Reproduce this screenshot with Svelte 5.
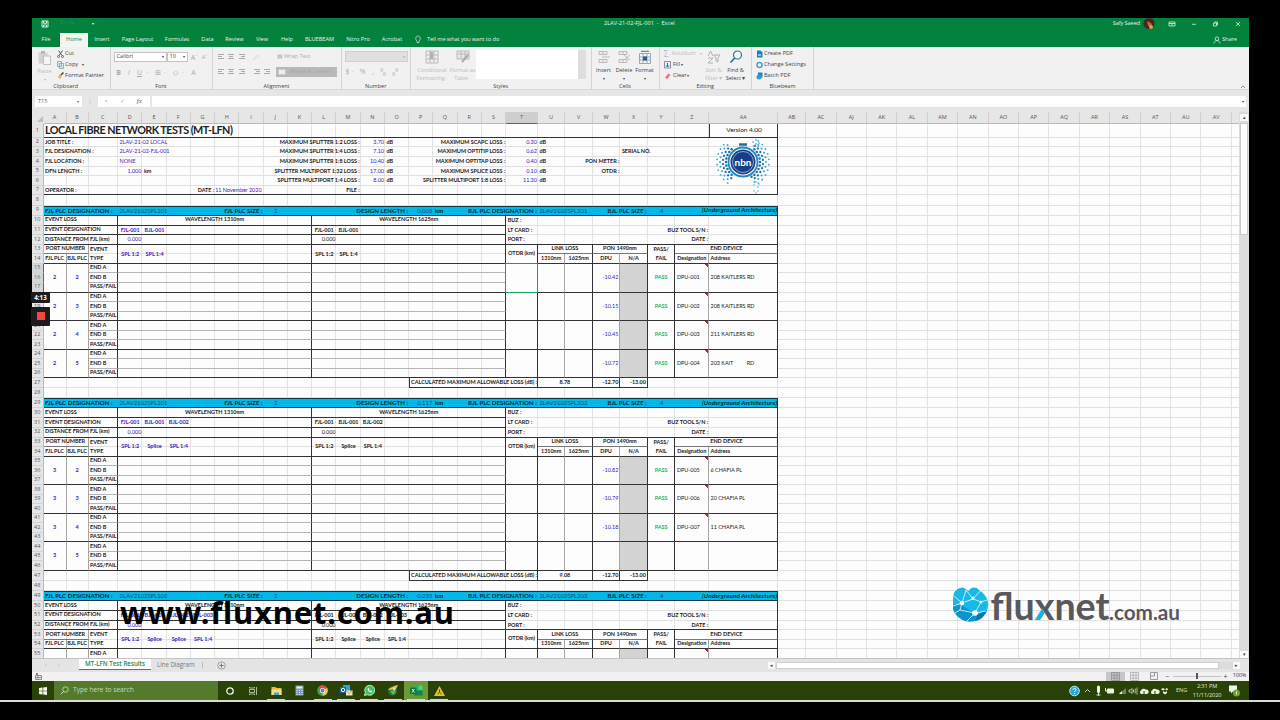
<script>
	const columns = [
		["A", 23], ["B", 22], ["C", 29.5], ["D", 24.4], ["E", 24.3], ["F", 24.2], ["G", 24.3], ["H", 24.2],
		["I", 24.3], ["J", 24.3], ["K", 24.2], ["L", 24.3], ["M", 24.2], ["N", 24.3], ["O", 24.2], ["P", 24.3],
		["Q", 24.2], ["R", 24.3], ["S", 24.3], ["T", 31.7], ["U", 27.5], ["V", 27.5], ["W", 27.5], ["X", 27.5],
		["Y", 27.5], ["Z", 33.7], ["AA", 69.3], ["AB", 27.8], ["AC", 30.4], ["AJ", 30.4], ["AK", 30.4],
		["AL", 30.4], ["AM", 30.4], ["AN", 30.5], ["AO", 30.4], ["AP", 30.4], ["AQ", 30.4], ["AR", 30.5],
		["AS", 30.4], ["AT", 30.4], ["AU", 30.4], ["AV", 30.5], ["", 8],
	];

	const blockHeights = [10, 9.9, 9.7, 9.7, 9.5, 9.5, ...Array(12).fill(9.54), 10, 10];
	const rowHeights = [14.2, ...Array(6).fill(9.58), 10.3, ...blockHeights, ...blockHeights, ...blockHeights.slice(0, 7)];
	const gridStyle =
		`grid-template-columns: 11.5px ${columns.map((c) => c[1] + "px").join(" ")};` +
		`grid-template-rows: 11.7px ${rowHeights.map((h) => h + "px").join(" ")};`;

	const col = (name) => columns.findIndex((c) => c[0] === name) + 2;

	const cells = [];
	function put(row, from, to, text = "", cls = "", span = 1) {
		cells.push({
			text,
			cls,
			area: `${row + 1} / ${col(from)} / ${row + 1 + span} / ${col(to) + 1}`,
		});
	}

	// job details
	put(1, "A", "Z", "LOCAL FIBRE NETWORK TESTS (MT-LFN)", "title bb");
	put(1, "AA", "AA", "Version 4.00", "version bl br bb");
	put(2, "A", "AA", "", "br bb", 6);
	["JOB TITLE :", "FJL DESIGNATION :", "FJL LOCATION :", "DFN LENGTH :"].forEach((t, i) => put(2 + i, "A", "C", t, "bold"));
	put(7, "A", "C", "OPERATOR :", "bold");
	put(2, "D", "G", "2LAV-21-02 LOCAL", "blue");
	put(3, "D", "G", "2LAV-21-02-FJL-001", "blue");
	put(4, "D", "G", "NONE", "blue");
	put(5, "D", "D", "1.000", "blue right");
	put(5, "E", "E", "km", "bold");
	put(7, "F", "G", "DATE :", "bold right");
	put(7, "H", "J", "11 November 2020", "blue date");
	put(7, "L", "M", "FILE :", "bold right");
	[
		["MAXIMUM SPLITTER 1:2 LOSS :", "3.70", "MAXIMUM SCAPC LOSS :", "0.30"],
		["MAXIMUM SPLITTER 1:4 LOSS :", "7.10", "MAXIMUM OPTITIP LOSS :", "0.62"],
		["MAXIMUM SPLITTER 1:8 LOSS :", "10.40", "MAXIMUM OPTITAP LOSS :", "0.40"],
		["SPLITTER MULTIPORT 1:32 LOSS :", "17.00", "MAXIMUM SPLICE LOSS :", "0.10"],
		["SPLITTER MULTIPORT 1:4 LOSS :", "8.00", "SPLITTER MULTIPORT 1:8 LOSS :", "11.30"],
	].forEach(([a, av, b, bv], i) => {
		put(2 + i, "I", "M", a, "bold right");
		put(2 + i, "N", "N", av, "blue right");
		put(2 + i, "O", "O", "dB", "bold");
		put(2 + i, "P", "S", b, "bold right");
		put(2 + i, "T", "T", bv, "blue right");
		put(2 + i, "U", "U", "dB", "bold");
	});
	put(3, "X", "Y", "SERIAL NO.", "bold");
	put(4, "V", "W", "PON METER :", "bold right");
	put(5, "V", "W", "OTDR :", "bold right");

	function block(s, b) {
		put(s, "A", "AA", "", "band");
		put(s, "A", "C", "FJL PLC DESIGNATION :", "bold bandtext");
		put(s, "D", "G", b.fjl, "bandvalue");
		put(s, "G", "I", "FJL PLC SIZE :", "bold right bandtext");
		put(s, "J", "J", "2", "center bandvalue");
		put(s, "M", "O", "DESIGN LENGTH :", "bold right bandtext");
		put(s, "P", "P", b.length, "right bandvalue");
		put(s, "Q", "Q", "km", "bold bandtext");
		put(s, "Q", "T", "BJL PLC DESIGNATION :", "bold right bandtext");
		put(s, "U", "W", b.bjl, "bandvalue");
		put(s, "V", "X", "BJL PLC SIZE :", "bold right bandtext");
		put(s, "Y", "Y", "4", "center bandvalue");
		put(s, "Z", "AA", "(Underground Architecture)", "bold italic right bandtext");

		put(s + 1, "A", "C", "EVENT LOSS", "bold bb br");
		put(s + 2, "A", "C", "EVENT DESIGNATION", "bold bb br");
		put(s + 3, "A", "C", "DISTANCE FROM FJL (km)", "bold bb br");
		put(s + 1, "D", "K", "WAVELENGTH 1310nm", "bold center bb br");
		put(s + 1, "L", "S", "WAVELENGTH 1625nm", "bold center bb br");
		for (const r of [s + 2, s + 3]) {
			put(r, "D", "K", "", "bb br");
			put(r, "L", "S", "", "bb br");
		}
		put(s + 3, "D", "D", "0.000", "blue right");
		put(s + 3, "L", "L", "0.000", "right");
		const left = ["D", "E", "F", "G"];
		const mid = ["L", "M", "N", "O"];
		b.events.forEach((e, i) => {
			put(s + 2, left[i], left[i], e, "blue bold center");
			put(s + 2, mid[i], mid[i], e, "bold center");
			put(s + 4, left[i], left[i], b.types[i], "blue bold center", 2);
			put(s + 4, mid[i], mid[i], b.types[i], "bold center", 2);
		});
		put(s + 1, "T", "U", "BUZ :", "bold");
		put(s + 2, "T", "U", "LT CARD :", "bold");
		put(s + 3, "T", "U", "PORT :", "bold");
		put(s + 1, "T", "AA", "", "bb br", 3);
		put(s + 2, "X", "Z", "BUZ TOOL S/N :", "bold right");
		put(s + 3, "X", "Z", "DATE :", "bold right");

		put(s + 4, "A", "B", "PORT NUMBER", "bold center thinb thinr");
		put(s + 5, "A", "A", "FJL PLC", "bold center bb thinr");
		put(s + 5, "B", "B", "BJL PLC", "bold center bb thinr");
		put(s + 4, "C", "C", "EVENT\nTYPE", "bold wrap bb br", 2);
		put(s + 4, "D", "K", "", "bb br", 2);
		put(s + 4, "L", "S", "", "bb br", 2);
		put(s + 4, "T", "T", "OTDR (km)", "bold center bb br white", 2);
		put(s + 4, "U", "V", "LINK LOSS", "bold center br thinb white");
		put(s + 5, "U", "U", "1310nm", "bold center bb thinr");
		put(s + 5, "V", "V", "1625nm", "bold center bb br");
		put(s + 4, "W", "X", "PON 1490nm", "bold center br thinb white");
		put(s + 5, "W", "W", "DPU", "bold center bb thinr");
		put(s + 5, "X", "X", "N/A", "bold center bb br");
		put(s + 4, "Y", "Y", "PASS/\nFAIL", "bold center wrap bb br white", 2);
		put(s + 4, "Z", "AA", "END DEVICE", "bold center br thinb white");
		put(s + 5, "Z", "Z", "Designation", "bold center bb thinr");
		put(s + 5, "AA", "AA", "Address", "bold bb br");

		b.ports.forEach(([fjl, bjl, loss, dpu, address], i) => {
			const r = s + 6 + i * 3;
			const span = Math.min(3, rowHeights.length - r + 1);
			put(r, "A", "A", fjl, "blue bold center white bb thinr", span);
			put(r, "B", "B", bjl, "blue bold center white bb thinr", span);
			["END A", "END B", "PASS/FAIL"].slice(0, span).forEach((t, j) => {
				const edge = j === 2 ? "bb" : "greyb";
				put(r + j, "C", "C", t, "bold br " + edge);
				put(r + j, "D", "K", "", "br " + edge);
				put(r + j, "L", "S", "", "br " + edge);
			});
			put(r, "T", "T", "", "white bb br", span);
			put(r, "U", "U", "", "white bb thinr", span);
			put(r, "V", "V", "", "white bb br", span);
			put(r, "W", "W", loss, "blue right white bb thinr", span);
			put(r, "X", "X", "", "grey bb br", span);
			put(r, "Y", "Y", loss ? "PASS" : "", "green bold center white bb br", span);
			put(r, "Z", "Z", dpu, "white bb thinr" + (loss || span < 3 ? " note" : ""), span);
			put(r, "AA", "AA", address, "pre white bb br", span);
		});

		if (b.allowed) {
			put(s + 18, "P", "T", "CALCULATED MAXIMUM ALLOWABLE LOSS (dB) :", "bold total bl bb br");
			put(s + 18, "U", "V", b.allowed, "bold center bb br white");
			put(s + 18, "W", "W", "-12.70", "bold right bb br");
			put(s + 18, "X", "X", "-13.00", "bold right bb br");
		}
	}

	block(9, {
		fjl: "2LAV2102SPL101", bjl: "2LAV2102SPL201", length: "0.005", allowed: "8.78",
		events: ["FJL-001", "BJL-001"],
		types: ["SPL 1:2", "SPL 1:4"],
		ports: [
			["2", "2", "-10.42", "DPU-001", "208 KAITLERS RD"],
			["2", "3", "-10.15", "DPU-002", "208 KAITLERS RD"],
			["2", "4", "-10.45", "DPU-003", "211 KAITLERS RD"],
			["2", "5", "-10.72", "DPU-004", "203 KAIT          RD"],
		],
	});
	block(29, {
		fjl: "2LAV2102SPL101", bjl: "2LAV2102SPL202", length: "0.117", allowed: "9.08",
		events: ["FJL-001", "BJL-001", "BJL-002"],
		types: ["SPL 1:2", "Splice", "SPL 1:4"],
		ports: [
			["3", "2", "-10.82", "DPU-005", "6 CHAFIA PL"],
			["3", "3", "-10.79", "DPU-006", "20 CHAFIA PL"],
			["3", "4", "-10.18", "DPU-007", "11 CHAFIA PL"],
			["3", "5", "", "", ""],
		],
	});
	block(49, {
		fjl: "2LAV2102SPL102", bjl: "2LAV2102SPL203", length: "0.235",
		events: ["FJL-001", "BJL-001", "BJL-002", "BJL-003"],
		types: ["SPL 1:2", "Splice", "Splice", "SPL 1:4"],
		ports: [["", "", "", "", ""]],
	});
	put(15, "T", "T", "", "selected", 3);

	const tabs = [
		["File", 28], ["Home", 28], ["Insert", 28], ["Page Layout", 43], ["Formulas", 36], ["Data", 25], ["Review", 29],
		["View", 26], ["Help", 24], ["BLUEBEAM", 41], ["Nitro Pro", 36], ["Acrobat", 32],
	];

	// dots around the nbn disc, thinning out towards the bottom right
	const dots = [];
	for (let ring = 0; ring < 4; ring++) {
		for (let a = ring % 2 ? 6 : 0; a < 360; a += 12) {
			const side = a < 62 || a > 302 || (a > 124 && a < 232);
			if (!side) continue;
			const rad = (a * Math.PI) / 180;
			const d = 17 + ring * 3;
			dots.push({ x: 27 + Math.cos(rad) * d, y: 24 + Math.sin(rad) * d, r: 1.25 - ring * 0.12, c: ring > 1 ? "#35a9cf" : "#1672b0" });
		}
	}
	[[40, 44], [43, 46], [38, 47], [42, 49], [46, 42], [38, 53], [42, 53], [40, 55]].forEach(([x, y]) => dots.push({ x, y, r: 0.8, c: "#4bb8cf" }));
	[[37, 4], [40, 2], [40, 6], [43, 5], [38, 8], [42, 9]].forEach(([x, y]) => dots.push({ x, y, r: 0.8, c: "#2b94bf" }));
</script>

{#snippet lines(w)}
	<svg width="8" height="8" viewBox="0 0 8 8"><path d="M1 1.5h6M{w} 3.5h4M1 5.5h6" stroke="#aaa" fill="none" /></svg>
{/snippet}

{#snippet grid(color)}
	<svg width="9" height="9" viewBox="0 0 9 9"><path d="M.5.5h8v8h-8zM.5 3.2h8M.5 6h8M3.2.5v8M6 .5v8" stroke={color} stroke-width=".7" fill="none" /></svg>
{/snippet}

<div class="screen">
	<div class="desktop">
		<header>
			<div class="titlebar">
				<svg class="save" width="8" height="8" viewBox="0 0 8 8"><path d="M1 1h6v6H1zM2.5 1v2.3h3V1M2.5 7V5h3v2" stroke="#d5f0df" fill="none" /></svg>
				<span class="undo">↶ · ↷ ·</span>
				<span class="qat">▾</span>
				<span class="doc">2LAV-21-02-FJL-001 &nbsp;-&nbsp; Excel</span>
				<span class="user">Safy Saeed</span>
				<svg class="avatar" width="12" height="12" viewBox="0 0 12 12"><circle cx="6" cy="5.5" r="5.5" fill="#43281f" /><path d="M4 3l4 2 2 4-5-1z" fill="#d15b42" /><circle cx="8" cy="9" r="2" fill="#d2a33f" /></svg>
				<svg class="winctl" width="76" height="10" viewBox="0 0 76 10" fill="none" stroke="#d5f0df" stroke-width=".8">
					<path d="M2 3h6v4H2zM2 4.5h6M5 4.5V7M25 5.3h4M46.5 4h3v3h-3zM47.5 4V3h3v3h-1M69 3l4 4M73 3l-4 4" />
				</svg>
			</div>
			<nav>
				{#each tabs as [name, width]}
					<span class="tab" class:active={name === "Home"} style="width: {width}px">{name}</span>
				{/each}
				<svg class="bulb" width="8" height="9" viewBox="0 0 8 9"><path d="M3 6C1 4.500 1.500 1 4 1s3 3.500 1 5v1.500H3z" stroke="#d5f0df" stroke-width=".7" fill="none" /></svg>
				<span class="tell">Tell me what you want to do</span>
				<span class="share">
					<svg width="8" height="8" viewBox="0 0 8 8" fill="none" stroke="#d5f0df" stroke-width=".8"><circle cx="4" cy="2.700" r="1.800" /><path d="M1 7.500C1 5.500 2.500 4.600 4 4.600S6.500 5.500 7 7.500" /></svg>
					Share
				</span>
			</nav>
		</header>

		<div class="ribbon">
			<section class="group clipboard">
				<div class="body">
					<div class="big off paste">
						<svg width="15" height="15" viewBox="0 0 15 15"><path d="M1.500 2.500h9v11h-9z" fill="#d5d0d3" /><path d="M4 1h4v2.500H4z" fill="#b5b0b3" /><path d="M6.500 6h7v8.500h-7z" fill="#f6f6f6" stroke="#c2bec1" /></svg>
						<span>Paste</span><i>▾</i>
					</div>
					<div class="stack">
						<span><svg width="7" height="8" viewBox="0 0 7 8"><path d="M1.500.5l3.500 5M5.500.5L2 5.500" stroke="#555" /><circle cx="1.500" cy="6.500" r="1" fill="none" stroke="#467" /><circle cx="5.500" cy="6.500" r="1" fill="none" stroke="#467" /></svg>Cut</span>
						<span><svg width="7" height="8" viewBox="0 0 7 8"><path d="M.5.500h4v5h-4zM2.500 2.500h4v5h-4z" fill="#dfeaf0" stroke="#7893a5" stroke-width=".7" /></svg>Copy &nbsp;<b>▾</b></span>
						<span><svg width="7" height="8" viewBox="0 0 7 8"><path d="M1 5l2-3 2 2-2 3z" fill="#e5b45b" /><path d="M4 3l2.500-2.500" stroke="#444" stroke-width="1.500" /></svg>Format Painter</span>
					</div>
				</div>
				<footer>Clipboard</footer>
			</section>
			<section class="group font">
				<div class="line">
					<span class="combo name">Calibri<b>▾</b></span><span class="combo size">10<b>▾</b></span>
					<span class="glyph">A˄</span><span class="glyph small">A˅</span>
				</div>
				<div class="line second">
					<span class="glyph"><b>B</b></span><span class="glyph"><em>I</em></span><span class="glyph u">U</span><span class="dash">·</span>
					<span class="glyph">⊞</span><span class="dash">·</span><span class="glyph">◇</span><span class="dash">·</span><span class="glyph">A</span>
				</div>
				<footer>Font</footer>
			</section>
			<section class="group alignment">
				<div class="line">
					{@render lines(1)}{@render lines(2)}{@render lines(3)}
					<span class="glyph rotate">⟋·</span>
					<span class="wraptext">▤ Wrap Text</span>
				</div>
				<div class="line second">
					{@render lines(1)}{@render lines(2)}{@render lines(3)}
					<span class="indent">{@render lines(3)}{@render lines(3)}</span>
					<span class="merge"><svg width="8" height="6" viewBox="0 0 8 6"><path d="M.5.500h7v5h-7z" fill="#eee" stroke="#ccc" /></svg>Merge &amp; Center</span>
				</div>
				<footer>Alignment</footer>
			</section>
			<section class="group number">
				<div class="numbox">▾</div>
				<div class="line second"><span>$ ·</span><span>%</span><span>,</span><span class="dec">⁰₀</span><span class="dec">₀⁰</span></div>
				<footer>Number</footer>
			</section>
			<section class="group styles">
				<div class="body">
					<div class="big off cond">
						<svg width="14" height="14" viewBox="0 0 14 14"><path d="M1 1h12v12H1zM1 5h12M1 9h12M5 1v12M9 1v12" fill="#eee" stroke="#bbb" /><path d="M5 2h3v7H5z" fill="#b3afb3" /></svg>
						<span>Conditional<br />Formatting ·</span>
					</div>
					<div class="big off fmt">
						<svg width="14" height="14" viewBox="0 0 14 14"><path d="M1 1h12v8H1zM1 4h12M5 1v8M9 1v8" fill="#e8e8e8" stroke="#bbb" /><path d="M6 12l6-7" stroke="#aaa" stroke-width="2" /></svg>
						<span>Format as<br />Table ·</span>
					</div>
					<div class="gallery"><div></div></div>
				</div>
				<footer>Styles</footer>
			</section>
			<section class="group cellsgroup">
				<div class="body">
					<div class="big">
						<svg width="14" height="14" viewBox="0 0 14 14"><path d="M2 1.500h8v3H2zM2 9.500h8v3H2zM6 1.500v3M6 9.500v3M5 7h8" fill="#eee" stroke="#bbb" /></svg>
						<span>Insert</span><i>▾</i>
					</div>
					<div class="big">
						<svg width="14" height="14" viewBox="0 0 14 14"><path d="M2 1.500h8v3H2zM2 9.500h8v3H2zM6 1.500v3M6 9.500v3M7 5l6 5M13 5l-6 5" fill="#eee" stroke="#bbb" /></svg>
						<span>Delete</span><i>▾</i>
					</div>
					<div class="big">
						<svg width="14" height="14" viewBox="0 0 14 14"><path d="M1.500 3.500h11v10h-11zM1.500 7h11M1.500 10h11M5 3.500v10M9 3.500v10" fill="#f6f6f6" stroke="#99a7b3" /><path d="M3 1.300h8" stroke="#3778a8" /><path d="M5 6.500h4v4H5z" fill="#235f91" /></svg>
						<span>Format</span><i>▾</i>
					</div>
				</div>
				<footer>Cells</footer>
			</section>
			<section class="group editing">
				<div class="body">
					<div class="stack">
						<span class="off"><em class="sigma">Σ</em>AutoSum &nbsp; <b>▾</b></span>
						<span><svg width="7" height="8" viewBox="0 0 7 8"><path d="M.5.500h6v6.500h-6z" fill="#e8eef2" stroke="#668" stroke-width=".7" /><path d="M3.500 2v4M2 4.500L3.500 6 5 4.500" stroke="#2273a8" fill="none" /></svg>&nbsp;Fill <b>▾</b></span>
						<span><svg width="7" height="8" viewBox="0 0 7 8"><path d="M1 5.500l3.500-4 2 1.500L3 7z" fill="#e4718e" /></svg>&nbsp;Clear <b>▾</b></span>
					</div>
					<div class="big off sort">
						<svg width="14" height="14" viewBox="0 0 14 14"><path d="M1 6l2.500-5L6 6M1 8h5l-5 5h5M7 5h6l-2 3v4l-2-1V8z" fill="none" stroke="#b0b0b0" /></svg>
						<span>Sort &amp;<br />Filter ▾</span>
					</div>
					<div class="big find">
						<svg width="14" height="14" viewBox="0 0 14 14"><circle cx="8.500" cy="5" r="4" fill="#f8fbfd" stroke="#2e6f9f" stroke-width="1.200" /><path d="M5.700 8L1.500 12.500" stroke="#2e6f9f" stroke-width="1.700" /></svg>
						<span>Find &amp;<br />Select ▾</span>
					</div>
				</div>
				<footer>Editing</footer>
			</section>
			<section class="group bluebeam">
				<div class="stack">
					<span><svg width="7" height="8" viewBox="0 0 7 8"><path d="M1 .5h3.500l2 2v5H1z" fill="#1283c5" /><path d="M2 5h3" stroke="#fff" /></svg>Create PDF</span>
					<span><svg width="7" height="8" viewBox="0 0 7 8"><circle cx="3.500" cy="4" r="2.500" fill="#fff" stroke="#43a3dc" stroke-width="1.500" /></svg>Change Settings</span>
					<span><svg width="7" height="8" viewBox="0 0 7 8"><path d="M2 .5h4.500v5H2z" fill="#1283c5" /><circle cx="3" cy="5" r="2.500" fill="#299bd8" /></svg>Batch PDF</span>
				</div>
				<footer>Bluebeam</footer>
			</section>
			<svg class="collapse" width="6" height="4" viewBox="0 0 6 4"><path d="M1 3l2-2 2 2" fill="none" stroke="#777" stroke-width=".8" /></svg>
		</div>

		<div class="formula">
			<span class="namebox">T15<b>▾</b></span>
			<span class="sep">⋮</span>
			<span class="fx"><span>×</span><span>✓</span><em>fx</em></span>
			<span class="input">▾</span>
		</div>

		<main>
			<div class="sheet" style={gridStyle}>
				<div class="corner"><svg width="6" height="6" viewBox="0 0 6 6"><path d="M6 0v6H0z" fill="#bdbdbd" /></svg></div>
				{#each columns as [name], i}
					<div class="colhead" class:current={name === "T"} style="grid-area: 1 / {i + 2}">{name}</div>
					<div class="vline" style="grid-area: 2 / {i + 2} / -1 / {i + 3}"></div>
				{/each}
				{#each rowHeights as _, i}
					<div class="rowhead" class:current={i > 13 && i < 17} style="grid-area: {i + 2} / 1">{i + 1}</div>
					<div class="hline" style="grid-area: {i + 2} / 2 / {i + 3} / -1"></div>
				{/each}
				{#each cells as c}
					<div class="cell {c.cls}" style="grid-area: {c.area}"><span>{c.text}</span></div>
				{/each}
				<svg class="nbn" width="55" height="57" viewBox="0 0 55 57" style="grid-area: 3 / {col('AA')} / 9 / {col('AA') + 1}">
					{#each dots as d}
						<circle cx={d.x} cy={d.y} r={d.r} fill={d.c} />
					{/each}
					<path d="M23 6.500h8" stroke="#1a6eab" stroke-width="2.500" />
					<circle cx="27" cy="24" r="14.500" fill="#fff" stroke="#2387b8" stroke-width="1.800" />
					<circle cx="27" cy="24" r="12.500" fill="#173f88" />
					<circle cx="27" cy="24" r="10.500" fill="none" stroke="#dfe9f5" stroke-width=".6" />
					<text x="27" y="27.500" text-anchor="middle">nbn</text>
				</svg>
			</div>
			<div class="vscroll"><span>▴</span><div></div><span>▾</span></div>
		</main>

		<div class="sheettabs">
			<span class="arrows">‹</span><span class="arrows">›</span>
			<span class="sheettab">MT-LFN Test Results</span>
			<span class="othertab">Line Diagram</span>
			<svg width="9" height="9" viewBox="0 0 9 9"><circle cx="4.500" cy="4.500" r="3.700" fill="none" stroke="#888" stroke-width=".7" /><path d="M2.500 4.500h4M4.500 2.500v4" stroke="#777" /></svg>
			<div class="hscroll"><span>◂</span><div></div><span>▸</span></div>
		</div>

		<div class="status">
			<svg width="7" height="7" viewBox="0 0 7 7"><path d="M.5 2.500h6v4h-6zM.5 4.500h6M3 2.500v4" fill="none" stroke="#777" stroke-width=".8" /><circle cx="2" cy="1" r="1" fill="#a33" /></svg>
			<div class="views">
				<span class="on">{@render grid("#8a8a8a")}</span>
				<span>{@render grid("#a5a5a5")}</span>
				<span><svg width="8" height="8" viewBox="0 0 8 8"><path d="M.5.500h7v7h-7zM.500 4h4V.500" fill="none" stroke="#888" stroke-width=".8" /></svg></span>
			</div>
			<div class="zoom"><span>−</span><i><b></b></i><span>+</span></div>
			<span class="pct">100%</span>
		</div>

		<div class="taskbar">
			<div class="start"><svg width="8" height="8" viewBox="0 0 8 8"><path d="M0 1l3.600-.5v3.200H0zM4.200.4L8 0v3.700H4.200zM0 4.300h3.600v3.200L0 7zM4.200 4.300H8V8l-3.800-.4z" fill="#f4f8ef" /></svg></div>
			<div class="search">
				<svg width="9" height="9" viewBox="0 0 9 9"><circle cx="5.500" cy="3.500" r="2.700" fill="none" stroke="#d7e2c9" stroke-width=".8" /><path d="M3.500 5.500L.8 8.300" stroke="#d7e2c9" /></svg>
				Type here to search
			</div>
			<div class="apps">
				<span><svg width="10" height="10" viewBox="0 0 10 10"><circle cx="5" cy="5" r="3.200" fill="none" stroke="#eef3e6" stroke-width="1.300" /></svg></span>
				<span><svg width="10" height="10" viewBox="0 0 10 10"><path d="M1.500 3.500h5v3h-5zM1.500 1v1h5V1M1.500 9V8h5v1M8.500 1v8" fill="none" stroke="#cdd8bd" stroke-width=".8" /></svg></span>
				<span class="open"><svg width="11" height="10" viewBox="0 0 11 10"><path d="M.5 1h4l1 1h5v7H.500z" fill="#e8b93a" /><path d="M.5 3.500h10V9H.500z" fill="#f7de88" /><path d="M3 9V6.500h5V9" fill="#45a3d2" /></svg></span>
				<span><svg width="9" height="11" viewBox="0 0 9 11"><path d="M.5.500h8v10h-8z" fill="#7e9db5" /><path d="M1.500 1.500h6v2h-6z" fill="#e2eef4" /><path d="M2 5v5M4.500 5v5M7 5v5" stroke="#dce8ee" stroke-dasharray="1 1" /></svg></span>
				<span class="open"><svg width="11" height="11" viewBox="0 0 11 11"><circle cx="5.500" cy="5.500" r="5.300" fill="#3ca354" /><path d="M5.500 5.500L.9 2.900A5.300 5.300 0 0 1 10.100 2.900z" fill="#dd4b3e" /><path d="M5.500 5.500l4.600-2.600A5.300 5.300 0 0 1 5.500 10.800z" fill="#f5c638" /><circle cx="5.500" cy="5.500" r="2.500" fill="#fff" /><circle cx="5.500" cy="5.500" r="1.900" fill="#4283e0" /></svg></span>
				<span class="open"><svg width="13" height="11" viewBox="0 0 13 11"><path d="M3 0h7v7H3z" fill="#2fa0e4" /><path d="M0 2h6v6H0z" fill="#1565ad" /><circle cx="3" cy="5" r="1.700" fill="none" stroke="#fff" /><path d="M6 5.500h6.500v5H6z" fill="#f0e4c9" /><path d="M6 5.500l3.200 3 3.300-3" fill="none" stroke="#cc9a4d" /></svg></span>
				<span class="open"><svg width="11" height="11" viewBox="0 0 11 11"><path d="M.5 10.500l.8-3A5 5 0 1 1 3.500 9.700z" fill="#3fc35b" stroke="#e6f7e8" stroke-width=".8" /><path d="M3.500 3.500c0 2 2 4 4 4l.7-1.300-1.400-.7-.7.600L5 5l.5-.800-.700-1.200z" fill="#fff" /></svg></span>
				<span class="open"><svg width="12" height="11" viewBox="0 0 12 11"><circle cx="5.500" cy="6" r="4.500" fill="#2b7042" /><path d="M1 5c2-3 4-2 6-4l4-1-2 4z" fill="#e6cc42" /><path d="M3 6l4-1 2 2-3 3z" fill="#60b94c" /><path d="M6 3l3 1-2 2z" fill="#d8eef4" /></svg></span>
				<span class="open excel"><svg width="13" height="11" viewBox="0 0 13 11"><path d="M4 .500h8.500v10H4z" fill="#2bb568" /><path d="M8.500.5h4V5h-4z" fill="#4bd185" /><path d="M4 5.500h8.500v5H4z" fill="#168348" /><path d="M0 2.500h6.500V9H0z" fill="#117a41" /><path d="M2 4l2.500 3.500M4.500 4L2 7.500" stroke="#fff" stroke-width=".8" /></svg></span>
				<span class="open"><svg width="11" height="10" viewBox="0 0 11 10"><path d="M5.500 0L11 10H0z" fill="#dfc62d" /><path d="M5.500 3.500v3M3.500 8l2-1.500 2 1.500" stroke="#594e13" fill="none" /></svg></span>
			</div>
			<div class="tray">
				<svg width="100" height="14" viewBox="0 0 100 14" fill="none" stroke="#eef3e6">
					<circle cx="6.500" cy="7" r="4.800" fill="#27a7d6" stroke="#c8e7f0" />
					<path d="M5 5.800c0-2 3-2 3 0 0 1-1.500 1-1.500 2.200M6.500 9v1" stroke="#fff" stroke-width=".9" />
					<path d="M17 8l2.500-2.500L22 8" stroke-width=".8" />
					<path d="M30.500 3v4.500" stroke-width="3" stroke-linecap="round" />
					<path d="M30.500 8v3.500M28.500 11h4" stroke-width=".9" />
					<path d="M39.500 5h6v4h-6z" fill="#eef3e6" /><path d="M37.500 4v3h2" />
					<path d="M51 10h7V4z" fill="#71825a" stroke="none" /><path d="M51 10h3V7z" fill="#eef3e6" stroke="none" />
					<path d="M61 6h1.500L64 4.500v5L62.500 8H61zM65.500 5.500v3M67.200 4.500v5M69 3.500v7" stroke-width=".7" />
					<path d="M73 10a2 2 0 0 1 0-3.500 3 3 0 0 1 5-.8 2 2 0 0 1 1 4.300zM84 10a2 2 0 0 1 0-3.500 3 3 0 0 1 5-.8 2 2 0 0 1 1 4.300z" fill="#eef3e6" stroke="none" />
					<path d="M76 7v3M87 7v3" stroke="#2a4208" />
					<path d="M95 4l2 1.300L95 6.600 93 5.300zM99 4l1 1.300-1 1.300L97 5.300zM95 7l2 1.300 2-1.300v2L97 10.500 95 9z" fill="#eef3e6" stroke="none" />
				</svg>
				<span class="lang">ENG</span>
				<span class="clock">2:31 PM<br />11/11/2020</span>
				<svg class="notify" width="13" height="13" viewBox="0 0 13 13"><path d="M1 1.500h8v6H5L3 9.500v-2H1z" fill="#eef3e6" /><circle cx="8.500" cy="9" r="3.500" fill="#6ba32f" /><path d="M8.500 7.200v3.500" stroke="#dbe8c4" /></svg>
			</div>
		</div>
	</div>

	<div class="edge"></div>
	<div class="timer">4:13</div>
	<div class="stop"><div></div></div>
	<div class="caption">www.fluxnet.com.au</div>
	<svg class="brand" width="238" height="48" viewBox="0 0 238 48">
		<defs>
			<clipPath id="lowerx"><path d="M84 42l11-14 3 5-5 9z" /></clipPath>
		</defs>
		<g transform="translate(-1 2)">
			<path d="M8 11C10 7 14 5 18 6l5 3c1-4 7-5 10-1 5 3 9 8 9 14 0 10-7 17-17 17-9 0-18-7-18-18 0-4 0-7 1-10z" fill="#17b9e6" />
			<path d="M7 22l10 2 14 9-2 6c-10 3-20-4-22-12z" fill="#0c96cb" /><path d="M31 33l10-5c-2 6-6 10-12 11z" fill="#0878a8" />
			<path d="M8 14l8 7 11-4 8-9M16 21l-2 7 15 3 6-11-8-3M14 28l-5 3M29 31l11-2M29 31l-8 8M16 21l-9 3M20 8l7 9M35 20l6-2M16 21l4-13" stroke="#f2fbfe" stroke-width=".8" fill="none" />
			<circle cx="16" cy="21" r="2.300" fill="#fff" /><circle cx="29" cy="31" r="2.800" fill="#fff" /><circle cx="27" cy="16" r="1.500" fill="#fff" /><circle cx="35" cy="20" r="1.500" fill="#fff" />
		</g>
		<text class="flux" x="43.500" y="39.500" textLength="119" lengthAdjust="spacingAndGlyphs">flu<tspan class="x">x</tspan>net</text>
		<text class="flux cyan" x="43.500" y="39.500" textLength="119" lengthAdjust="spacingAndGlyphs" clip-path="url(#lowerx)" aria-hidden="true">fluxnet</text>
		<text class="com" x="162" y="39.500" textLength="71" lengthAdjust="spacingAndGlyphs">.com.au</text>
	</svg>
</div>

<style>
	:global(body) {
		background: #000;
		overflow: hidden;
	}

	.screen {
		position: relative;
		width: 1280px;
		height: 720px;
		box-sizing: border-box;
		padding: 18px 31px 0 32px;
		background: #000;
		font-family: "Open Sans", "Noto Sans", sans-serif;
		font-size: 5.6px;
		line-height: 1;
		color: #444;
		overflow: hidden;
	}

	.screen :global(*) {
		box-sizing: border-box;
	}

	svg {
		display: block;
		flex: none;
	}

	.desktop {
		display: flex;
		flex-direction: column;
		width: 1217px;
		height: 682px;
		background: #e6e6e6;
		white-space: nowrap;
	}

	header {
		height: 28.5px;
		background: #03823e;
		color: #e3f4e9;
	}

	.titlebar {
		display: flex;
		align-items: center;
		height: 14px;
		padding: 0 3px 2px 9px;
	}

	.undo { margin-left: 11px; width: 26px; color: #1c995a; }
	.qat { margin-left: 6px; font-size: 4px; }
	.doc { margin-left: 510px; width: 72px; }
	.user { margin-left: 433px; width: 31px; text-align: right; letter-spacing: -0.1px; }
	.avatar { margin-left: 3px; }
	.winctl { margin-left: 12px; }

	nav {
		display: flex;
		align-items: stretch;
		height: 14.5px;
		padding-top: 1px;
	}

	.tab {
		display: flex;
		align-items: center;
		justify-content: center;
		flex: none;
	}

	.tab.active {
		background: #f3f5f3;
		color: #1a8752;
	}

	.bulb { margin: 2px 0 0 6px; }
	.tell { margin: 4px 0 0 5px; letter-spacing: -0.05px; }
	.share {
		display: flex;
		align-items: center;
		gap: 1px;
		margin: 0 12px 0 auto;
	}

	.ribbon {
		display: flex;
		height: 43.5px;
		background: #f1f1f2;
		border-bottom: 1px solid #d9d9d9;
	}

	.group {
		display: flex;
		flex-direction: column;
		flex: none;
		height: 43px;
		padding-top: 1.5px;
		border-right: 1px solid #d4d4d4;
	}

	.group footer {
		margin-top: auto;
		padding-bottom: 0.5px;
		text-align: center;
		font-size: 5.5px;
	}

	.clipboard { width: 78.5px; }
	.clipboard footer { padding-right: 10px; }
	.font { width: 102px; }
	.alignment { width: 129px; }
	.number { width: 69.5px; }
	.styles { width: 180.5px; }
	.cellsgroup { width: 68px; }
	.editing { width: 92.5px; }
	.bluebeam { width: 62px; }

	.body { display: flex; }
	.stack {
		display: flex;
		flex-direction: column;
	}
	.stack > span {
		display: flex;
		align-items: center;
		gap: 1px;
		height: 11px;
	}
	.stack b, .combo b, .namebox b { font-size: 4px; font-weight: 400; }
	.clipboard .stack { margin-left: -1px; }
	.sigma { width: 8px; font-size: 9px; font-style: normal; }

	.big {
		display: flex;
		flex-direction: column;
		align-items: center;
		width: 20px;
		padding-top: 2px;
		line-height: 7.5px;
		text-align: center;
	}
	.big span { margin-top: 3px; letter-spacing: -0.05px; }
	.big i { font-style: normal; font-size: 4px; }
	.off { color: #bcbcbc; }
	.paste { width: 25px; margin-right: 1px; }
	.cond { width: 36px; margin-left: 3px; }
	.fmt { width: 25px; }
	.gallery {
		width: 110px;
		height: 29px;
		margin: 2px 0 0 1px;
		padding-right: 8px;
		background: #dedede;
	}
	.gallery div { height: 100%; background: #fff; }
	.cellsgroup .body { padding-left: 2px; gap: 0.5px; }
	.cellsgroup .big { width: 20px; }
	.editing .stack { width: 42px; padding-left: 4px; }
	.sort { width: 24px; }
	.bluebeam .stack { padding-left: 4px; }

	.line {
		display: flex;
		align-items: center;
		height: 15px;
		padding: 3px 0 0 3px;
		gap: 2.5px;
		color: #aaa;
		font-size: 7px;
	}
	.line.second { padding-left: 4px; }
	.combo {
		display: flex;
		align-items: center;
		justify-content: space-between;
		height: 10.5px;
		padding: 0 2px;
		background: #fff;
		border: 1px solid #c4c4c4;
		color: #444;
		font-size: 5.6px;
	}
	.combo.name { width: 53px; }
	.combo.size { width: 21px; margin-left: -2.5px; }
	.glyph { min-width: 8px; text-align: center; }
	.glyph.small { font-size: 6px; }
	.glyph.u { text-decoration: underline; }
	.dash { width: 5px; }
	.alignment .line { padding-left: 4px; }
	.rotate { margin-left: 4px; }
	.wraptext { margin-left: 14px; font-size: 5.6px; }
	.indent { display: flex; gap: 2px; margin-left: 5px; }
	.merge {
		display: flex;
		align-items: center;
		gap: 4px;
		width: 61px;
		height: 10.5px;
		margin-left: 2px;
		padding-left: 2px;
		background: #b9b9b9;
		color: #a8a8a8;
		font-size: 5.6px;
	}
	.numbox {
		width: 63px;
		height: 11px;
		margin: 3px 0 0 3px;
		padding: 3px 2px;
		background: #e0e0e0;
		border: 1px solid #d0d0d0;
		color: #aaa;
		font-size: 4px;
		text-align: right;
	}
	.number .line { gap: 6.5px; height: 16px; }
	.number .dec { font-size: 8px; }
	.collapse { margin: 38px 3px 0 auto; }

	.formula {
		display: flex;
		align-items: center;
		height: 22px;
		padding: 6px 3px 5px;
	}
	.namebox, .fx, .input {
		display: flex;
		align-items: center;
		height: 11px;
		background: #fff;
	}
	.namebox { width: 47px; justify-content: space-between; padding: 0 3px; color: #666; }
	.sep { width: 15.5px; text-align: center; color: #bbb; }
	.fx { width: 52px; gap: 12px; padding-left: 7px; color: #aaa; }
	.fx em { color: #555; font-family: "Liberation Serif", serif; font-size: 7px; }
	.input { flex: 1; margin-left: 2px; justify-content: flex-end; padding-right: 2px; font-size: 4px; }

	main {
		display: flex;
		height: 545.5px;
	}

	.sheet {
		display: grid;
		width: 1207px;
		height: 545.5px;
		overflow: hidden;
		background: #fdfdfd;
		font-family: Lato, "Noto Sans", sans-serif;
		font-size: 5.5px;
		color: #222;
	}

	.corner, .colhead, .rowhead {
		display: flex;
		align-items: center;
		justify-content: center;
		background: #e6e6e6;
		color: #555;
		font-family: "Open Sans", sans-serif;
		font-size: 5.5px;
	}
	.corner { grid-area: 1 / 1; justify-content: flex-end; padding: 2px 1px 0 0; }
	.colhead { border-right: 1px solid #cfcfcf; border-bottom: 1px solid #b9b9b9; }
	.rowhead { border-bottom: 1px solid #d2d2d2; border-right: 1px solid #b9b9b9; }
	.colhead.current { background: #cfcfcf; border-bottom-color: #1e8a53; color: #1e7a4b; }
	.rowhead.current { background: #d6d6d6; border-right-color: #1e8a53; color: #3f7a5b; }
	.vline { border-right: 1px solid #e3e3e3; }
	.hline { border-bottom: 1px solid #e0e0e0; }

	.cell {
		display: flex;
		align-items: center;
		min-width: 0;
		padding: 0 1px 0 1.5px;
		letter-spacing: -0.05px;
	}
	.bold { font-weight: 700; letter-spacing: -0.03px; }
	.right { justify-content: flex-end; }
	.center { justify-content: center; padding: 0; }
	.wrap { line-height: 9px; white-space: pre-line; }
	.wrap.center { text-align: center; }
	.pre { white-space: pre; }
	.blue { color: #3b22c4; }
	.green { color: #22b564; }
	.white { background: #fdfdfd; }
	.grey { background: #d3d3d3; }
	.bb { border-bottom: 1px solid #333; }
	.br { border-right: 1px solid #333; }
	.bl { border-left: 1px solid #333; }
	.thinb { border-bottom: 1px solid #777; }
	.thinr { border-right: 1px solid #a5a5a5; }
	.greyb { border-bottom: 1px solid #b5b5b5; }
	.title { font-size: 10.8px; font-weight: 700; letter-spacing: -0.55px; }
	.version { justify-content: center; font-size: 6.5px; }
	.band { background: #00b9ea; border: 1px solid #123844; border-width: 1px 1px 1px 0; }
	.bandtext { color: #02283c; font-size: 6.1px; letter-spacing: 0.05px; }
	.bandvalue { color: #0b4f78; font-size: 6px; }
	.italic { font-style: italic; font-size: 6.3px; letter-spacing: 0.1px; }
	.date { padding-left: 0; }
	.total { padding-left: 1px; }
	.note { background: linear-gradient(225deg, #c8203a 2.5px, #fdfdfd 2.7px); }
	.selected { margin: -1px 0 0 -1px; border: 1px solid #12a25a; z-index: 1; }
	.nbn { justify-self: start; margin-left: 7px; z-index: 1; }
	.nbn text { font: 700 10px Lato, sans-serif; fill: #fff; }

	.vscroll {
		display: flex;
		flex-direction: column;
		width: 10px;
		padding: 2px 1px 0;
		background: #dcdcdc;
		font-size: 5px;
		text-align: center;
	}
	.vscroll span { height: 7px; background: #fafafa; line-height: 7px; }
	.vscroll div { height: 112px; margin: 1.5px 0 auto; background: #fdfdfd; border: 1px solid #c9c9c9; }

	.sheettabs {
		display: flex;
		align-items: center;
		height: 14px;
		border-top: 1px solid #c3c3c3;
		background: #e4e4e4;
		font-size: 6.2px;
	}
	.arrows { width: 13px; padding-left: 2px; color: #bbb; }
	.arrows:first-child { margin-left: 11px; }
	.sheettab {
		display: flex;
		align-items: center;
		justify-content: center;
		align-self: flex-start;
		width: 72px;
		height: 11.5px;
		margin-left: 10px;
		background: #fff;
		border-bottom: 1px solid #27915c;
		color: #1b8752;
		font-weight: 600;
	}
	.othertab { width: 51.5px; padding-left: 6px; margin-right: 14px; border-right: 1px solid #bbb; color: #777; letter-spacing: -0.05px; }
	.hscroll {
		display: flex;
		align-items: center;
		width: 472px;
		margin-left: auto;
		margin-right: 9px;
		background: #dcdcdc;
	}
	.hscroll span { width: 7px; background: #fafafa; text-align: center; font-size: 5px; line-height: 7px; }
	.hscroll div { width: 443px; height: 7px; margin: 0 auto 0 1px; background: #fff; border: 1px solid #cfcfcf; }

	.status {
		display: flex;
		align-items: center;
		height: 9.5px;
		padding-left: 3px;
		background: #f1f1f1;
	}
	.views { display: flex; margin-left: auto; }
	.views span { display: flex; align-items: center; justify-content: center; width: 19px; height: 9.5px; }
	.views .on { background: #c6c6c6; }
	.zoom { display: flex; align-items: center; width: 67px; justify-content: center; gap: 3px; font-size: 7px; }
	.zoom i { display: flex; justify-content: center; width: 48px; height: 1px; background: #c4c4c4; }
	.zoom b { width: 2px; height: 6px; margin-top: -2.5px; background: #555; }
	.pct { width: 19px; text-align: center; letter-spacing: -0.2px; }

	.taskbar {
		display: flex;
		height: 19px;
		background: #2a4208;
		color: #dfe8d2;
	}
	.start { display: flex; align-items: center; justify-content: center; width: 22px; }
	.search {
		display: flex;
		align-items: center;
		gap: 4px;
		width: 164px;
		padding-left: 6px;
		background: #557a2c;
		color: #cbd9b6;
		font-size: 6.6px;
	}
	.apps { display: flex; }
	.apps span { display: flex; align-items: center; justify-content: center; width: 23.3px; }
	.apps .open { background: linear-gradient(#cddbb6, #cddbb6) center bottom / 18px 1px no-repeat; }
	.apps .excel { background-color: #6c9a35; }
	.tray { display: flex; align-items: center; margin-left: auto; }
	.lang { width: 22px; padding-left: 7px; margin-left: 1px; }
	.clock { width: 32px; line-height: 8.5px; text-align: center; letter-spacing: -0.1px; }
	.notify { margin: 0 8px 0 5px; }

	.edge {
		position: absolute;
		top: 700px;
		left: 0;
		width: 1280px;
		height: 2px;
		background: #d9dcd6;
	}
	.timer, .stop {
		position: absolute;
		left: 31px;
		width: 19px;
		background: #1d1b1c;
		border-radius: 1px;
	}
	.timer {
		top: 292px;
		height: 11px;
		color: #fff;
		font-size: 6.2px;
		font-weight: 700;
		line-height: 11px;
		text-align: center;
	}
	.stop { top: 307px; height: 18.5px; padding: 5px 0 0 6px; }
	.stop div { width: 8px; height: 8px; background: #f2473c; }
	.caption {
		position: absolute;
		top: 594px;
		left: 120px;
		color: #000;
		font: 700 31px/36px "Noto Sans", sans-serif;
		letter-spacing: 0.8px;
		white-space: nowrap;
	}
	.brand { position: absolute; left: 947px; top: 580px; }
	.flux { font: 700 38px Lato, sans-serif; fill: #58595c; }
	.flux.cyan { fill: #16b6e4; }
	.com { font: 700 21px Lato, sans-serif; fill: #58595c; }
</style>
